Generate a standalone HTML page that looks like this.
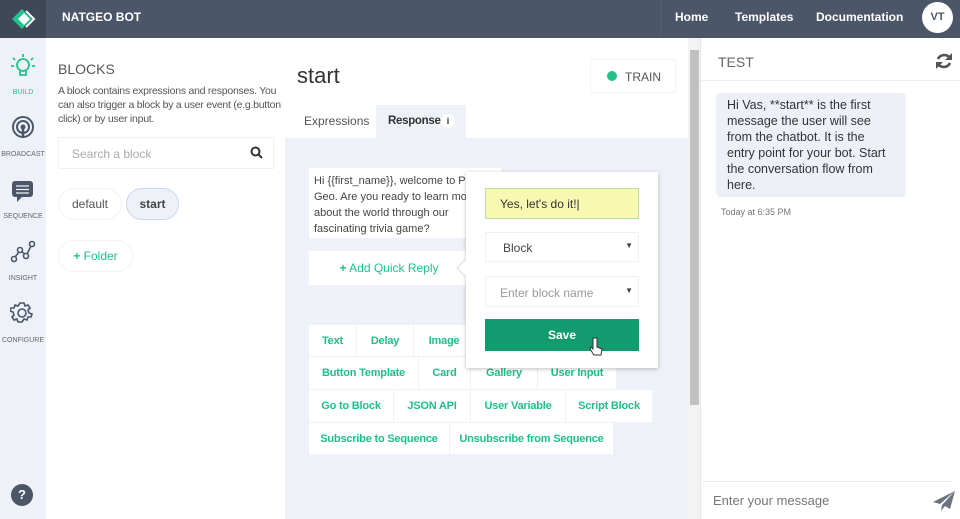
<!DOCTYPE html>
<html><head><meta charset="utf-8"><style>
*{box-sizing:border-box;margin:0;padding:0}
body{width:960px;height:519px;overflow:hidden;font-family:"Liberation Sans",sans-serif;background:#eef1f7;position:relative;color:#333}
.a{position:absolute}
.top{left:0;top:0;width:960px;height:38px;background:#4b5768}
.logo{left:0;top:0;width:46px;height:38px;background:#3e4856}
.nav{color:#fff;font-weight:bold;font-size:12px;top:10px}
.side{left:0;top:38px;width:46px;height:481px;background:#eef1f8}
.lbl{font-size:7px;color:#666;width:46px;text-align:center;left:0}
.blocks{left:46px;top:38px;width:239px;height:481px;background:#fff}
.btn{background:#fff;color:#1fbf86;font-size:11px;font-weight:bold;letter-spacing:-0.2px;display:flex;align-items:center;justify-content:center;border-right:1px solid #eef1f7;white-space:nowrap}
.inp{background:#fff;border:1px solid #f0f1f4;font-size:12px;color:#444}
</style></head><body>
<div class="a top"></div>
<div class="a logo"><svg width="46" height="38"><path d="M12 19 L22 9 L32 19 L22 29Z" fill="#22c38a"/><path d="M18 19 L24 13 L30 19 L24 25Z" fill="#fff"/><path d="M26 11 L34 19 L26 27" stroke="#fff" stroke-width="2" fill="none"/></svg></div>
<div class="a nav" style="left:62px;font-size:12px">NATGEO BOT</div>
<div class="a" style="left:660px;top:0;width:1px;height:38px;background:#56606f"></div>
<div class="a nav" style="left:675px">Home</div>
<div class="a nav" style="left:735px">Templates</div>
<div class="a nav" style="left:816px">Documentation</div>
<div class="a" style="left:922px;top:2px;width:31px;height:31px;border-radius:50%;background:#fff;color:#4b5768;font-size:11px;font-weight:bold;text-align:center;line-height:31px">VT</div>

<div class="a side"></div>
<svg class="a" style="left:8px;top:52px" width="30" height="30"><g stroke="#22c38a" stroke-width="1.8" fill="none"><circle cx="15" cy="13" r="6"/><path d="M12 19v4h6v-4M15 2v3M5 6l2 2M25 6l-2 2M3 14h3M24 14h3"/></g></svg>
<div class="a lbl" style="top:89px;color:#22c38a">BUILD</div>
<svg class="a" style="left:10px;top:115px" width="26" height="26"><g stroke="#4b5768" stroke-width="2" fill="none"><circle cx="13" cy="12" r="10"/><circle cx="13" cy="12" r="6"/></g><circle cx="13" cy="12" r="2.5" fill="#4b5768"/><path d="M13 12v11" stroke="#4b5768" stroke-width="2.5"/></svg>
<div class="a lbl" style="top:151px">BROADCAST</div>
<svg class="a" style="left:11px;top:180px" width="24" height="24"><rect x="1" y="1" width="21" height="16" rx="3" fill="#4b5768"/><path d="M6 17v5l5-5" fill="#4b5768"/><path d="M5 6h13M5 9.5h13M5 13h13" stroke="#eef1f8" stroke-width="1.3"/></svg>
<div class="a lbl" style="top:213px">SEQUENCE</div>
<svg class="a" style="left:10px;top:240px" width="26" height="24"><g stroke="#4b5768" stroke-width="1.6" fill="none"><circle cx="4" cy="19" r="2.5"/><circle cx="10" cy="10" r="2.5"/><circle cx="16" cy="16" r="2.5"/><circle cx="22" cy="4" r="2.5"/><path d="M5 17l4-5M12 12l3 2M17 14l4-8"/></g></svg>
<div class="a lbl" style="top:275px">INSIGHT</div>
<svg class="a" style="left:10px;top:301px" width="24" height="24"><g stroke="#4b5768" stroke-width="1.6" fill="none"><circle cx="12" cy="12" r="4"/><path d="M10 2h4l1 3 3-1 2 3-2 2 1 3 3 1v0l-1 3-3 0-1 3-3-1-2 3h-4l-1-3-3 1-2-3 2-2-1-3-3-1 1-3 3 0 1-3 3 1z"/></g></svg>
<div class="a lbl" style="top:337px">CONFIGURE</div>
<div class="a" style="left:11px;top:484px;width:22px;height:22px;border-radius:50%;background:#4b5768;color:#fff;font-size:13px;font-weight:bold;text-align:center;line-height:22px">?</div>

<div class="a blocks"></div>
<div class="a" style="left:58px;top:61px;font-size:14px;color:#555">BLOCKS</div>
<div class="a" style="left:58px;top:84px;width:226px;font-size:10.5px;letter-spacing:-0.25px;line-height:14px;color:#555">A block contains expressions and responses. You can also trigger a block by a user event (e.g.button click) or by user input.</div>
<div class="a inp" style="left:58px;top:137px;width:216px;height:32px;color:#aaa;padding:9px 13px">Search a block</div>
<svg class="a" style="left:250px;top:146px" width="13" height="13"><circle cx="5.5" cy="5.5" r="4" stroke="#333" stroke-width="2" fill="none"/><path d="M8.5 8.5l3.5 3.5" stroke="#333" stroke-width="2"/></svg>
<div class="a" style="left:58px;top:188px;width:64px;height:32px;border-radius:16px;border:1px solid #f2f2f4;font-size:12px;color:#555;text-align:center;line-height:30px">default</div>
<div class="a" style="left:126px;top:188px;width:53px;height:32px;border-radius:16px;border:1px solid #c8d8ee;background:#eef1f8;font-size:12px;font-weight:bold;color:#444;text-align:center;line-height:30px">start</div>
<div class="a" style="left:58px;top:240px;width:75px;height:32px;border-radius:16px;border:1px solid #f2f2f4;font-size:12px;color:#21c28a;text-align:center;line-height:30px"><b>+</b> Folder</div>

<div class="a" style="left:285px;top:38px;width:403px;height:100px;background:#fff"></div>
<div class="a" style="left:297px;top:63px;font-size:22px;color:#333">start</div>
<div class="a" style="left:590px;top:59px;width:86px;height:34px;border:1px solid #f2f3f5;font-size:12px;color:#555;padding:10px 0 0 34px">TRAIN</div>
<div class="a" style="left:607px;top:71px;width:10px;height:10px;border-radius:50%;background:#22c38a"></div>
<div class="a" style="left:304px;top:114px;font-size:12px;color:#555">Expressions</div>
<div class="a" style="left:376px;top:105px;width:90px;height:33px;background:#eef1f7"></div>
<div class="a" style="left:388px;top:115px;font-size:11.5px;font-weight:bold;letter-spacing:-0.3px;color:#333">Response</div>
<div class="a" style="left:441px;top:114px;width:14px;height:14px;border-radius:50%;background:#fff;font-size:9px;font-weight:bold;text-align:center;line-height:14px">i</div>

<div class="a" style="left:309px;top:168px;width:192px;height:70px;background:#fff;font-size:11px;line-height:16px;padding:5px;color:#444;overflow:hidden;white-space:nowrap">Hi {{first_name}}, welcome to Po<br>Geo. Are you ready to learn mo<br>about the world through our<br>fascinating trivia game?</div>
<div class="a" style="left:309px;top:251px;width:160px;height:34px;background:#fff;font-size:12px;color:#21c28a;text-align:center;line-height:34px"><b>+</b> Add Quick Reply</div>

<div class="a" style="left:309px;top:325px;height:31px;width:166px;display:flex"><div class="btn" style="width:48px">Text</div><div class="btn" style="width:57px">Delay</div><div class="btn" style="width:61px">Image</div></div>
<div class="a" style="left:309px;top:357px;height:32px;width:308px;display:flex"><div class="btn" style="width:110px">Button Template</div><div class="btn" style="width:52px">Card</div><div class="btn" style="width:67px">Gallery</div><div class="btn" style="width:79px">User Input</div></div>
<div class="a" style="left:309px;top:390px;height:32px;width:344px;display:flex"><div class="btn" style="width:85px">Go to Block</div><div class="btn" style="width:77px">JSON API</div><div class="btn" style="width:95px">User Variable</div><div class="btn" style="width:87px">Script Block</div></div>
<div class="a" style="left:309px;top:423px;height:31px;width:305px;display:flex"><div class="btn" style="width:141px">Subscribe to Sequence</div><div class="btn" style="width:164px">Unsubscribe from Sequence</div></div>

<div class="a" style="left:466px;top:172px;width:192px;height:196px;background:#fff;box-shadow:0 1px 4px rgba(0,0,0,.25)"></div>
<div class="a" style="left:460px;top:263px;width:10px;height:10px;background:#fff;transform:rotate(45deg);box-shadow:-1px 1px 2px rgba(0,0,0,.15)"></div>
<div class="a" style="left:485px;top:188px;width:154px;height:31px;background:#f7f9b2;border:1px solid #b6e3a0;font-size:12px;color:#333;padding:8px 14px">Yes, let's do it!|</div>
<div class="a inp" style="left:485px;top:232px;width:154px;height:30px;padding:8px 17px">Block<span style="position:absolute;right:5px;font-size:8px">▼</span></div>
<div class="a inp" style="left:485px;top:276px;width:154px;height:31px;padding:9px 14px;color:#999">Enter block name<span style="position:absolute;right:5px;font-size:8px;color:#444">▼</span></div>
<div class="a" style="left:485px;top:319px;width:154px;height:32px;background:#139a6e;color:#fff;font-size:12px;font-weight:bold;text-align:center;line-height:32px">Save</div>
<svg class="a" style="left:589px;top:337px" width="14" height="20"><path d="M4 1v11l-2-2-1 2 4 6h7l1-6-5-2v-9z" fill="#fff" stroke="#333" stroke-width="1"/></svg>

<div class="a" style="left:688px;top:38px;width:12px;height:481px;background:#f3f3f3"></div>
<div class="a" style="left:690px;top:50px;width:9px;height:355px;background:#c1c1c1"></div>

<div class="a" style="left:700px;top:38px;width:260px;height:481px;background:#fff;border-left:1px solid #e4e6ea"></div>
<div class="a" style="left:718px;top:54px;font-size:14px;color:#666">TEST</div>
<svg class="a" style="left:934px;top:51px" width="20" height="20"><g stroke="#555" stroke-width="2.6" fill="none"><path d="M16 7a7 7 0 0 0-12 1M4 13a7 7 0 0 0 12-1"/></g><path d="M18 2v7h-7z" fill="#555"/><path d="M2 18v-7h7z" fill="#555"/></svg>
<div class="a" style="left:701px;top:80px;width:259px;height:1px;background:#eceef2"></div>
<div class="a" style="left:716px;top:93px;width:190px;height:104px;background:#eef0f7;border-radius:4px;font-size:12.5px;line-height:16px;color:#333;padding:4px 11px">Hi Vas, **start** is the first message the user will see from the chatbot. It is the entry point for your bot. Start the conversation flow from here.</div>
<div class="a" style="left:721px;top:207px;font-size:9px;color:#777">Today at 6:35 PM</div>
<div class="a" style="left:703px;top:481px;width:250px;height:1px;background:#eceef2"></div>
<div class="a" style="left:713px;top:493px;font-size:13px;color:#777">Enter your message</div>
<svg class="a" style="left:932px;top:490px" width="24" height="22"><path d="M23 1L1 12l7 2zM23 1L10 15l-1 6 4-5 5 3z" fill="#6b7380"/></svg>
</body></html>
